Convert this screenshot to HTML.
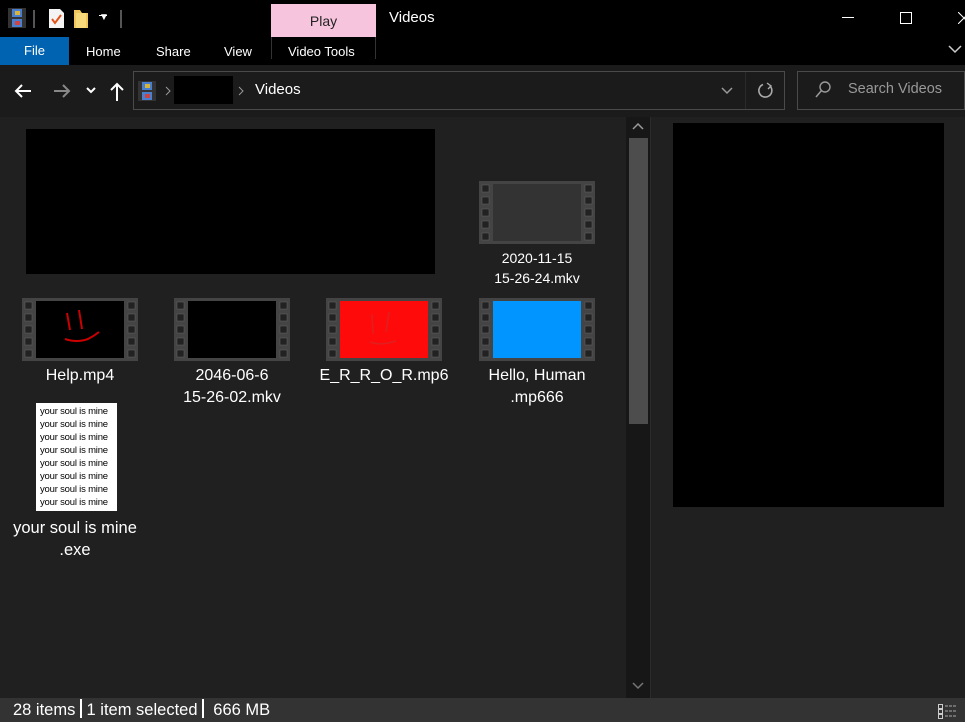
<!DOCTYPE html>
<html><head><meta charset="utf-8"><style>
*{margin:0;padding:0;box-sizing:border-box}
body{width:965px;height:722px;background:#202020;font-family:"Segoe UI","Liberation Sans",sans-serif;color:#fff;position:relative;overflow:hidden}
.a{position:absolute}
.t{font-size:13px}
.lbl{position:absolute;text-align:center;font-size:16px;color:#fff;line-height:22px;white-space:nowrap}
</style></head><body>
<div class="a" style="left:0;top:0;width:965px;height:65px;background:#000"></div>
<svg class="a" style="left:8px;top:8px" width="18" height="20" viewBox="0 0 18 20"><rect width="18" height="20" fill="#333"/><rect x="4" y="1" width="10" height="8" fill="#4a7fd0"/><rect x="4" y="11" width="10" height="8" fill="#4a7fd0"/><rect x="7" y="3" width="5" height="4" fill="#d9b43a"/><rect x="7" y="13" width="5" height="4" fill="#c44"/></svg>
<div class="a" style="left:33px;top:10px;width:2px;height:18px;background:#555"></div>
<svg class="a" style="left:49px;top:9px" width="15" height="19"><path d="M0 0H11L15 4V19H0Z" fill="#f4f4f4"/><path d="M3 10L6 14L12 6" stroke="#e2541b" stroke-width="2" fill="none"/></svg>
<svg class="a" style="left:74px;top:10px" width="14" height="18"><path d="M0 0H6L8 3H14V18H0Z" fill="#f0c65a"/><rect x="2" y="3" width="10" height="15" fill="#f7d97c"/></svg>
<div class="a" style="left:99px;top:12px;color:#fff;font-size:10px">&#9660;</div>
<div class="a" style="left:99px;top:15px;width:8px;height:1px;background:#fff"></div>
<div class="a" style="left:120px;top:10px;width:2px;height:18px;background:#555"></div>
<div class="a" style="left:271px;top:4px;width:105px;height:33px;background:#f7c4de;color:#222;font-size:14px;text-align:center;line-height:34px">Play</div>
<div class="a" style="left:389px;top:9px;font-size:15px">Videos</div>
<div class="a" style="left:842px;top:17px;width:12px;height:1px;background:#fff"></div>
<div class="a" style="left:900px;top:12px;width:12px;height:12px;border:1px solid #fff"></div>
<svg class="a" style="left:958px;top:12px" width="7" height="12"><path d="M0 0L12 12M12 0L0 12" stroke="#fff"/></svg>
<div class="a" style="left:0;top:37px;width:69px;height:28px;background:#0063b1;font-size:13px;text-align:center;line-height:28px">File</div>
<div class="a t" style="left:86px;top:44px">Home</div>
<div class="a t" style="left:156px;top:44px">Share</div>
<div class="a t" style="left:224px;top:44px">View</div>
<div class="a" style="left:271px;top:37px;width:1px;height:22px;background:#333"></div>
<div class="a" style="left:375px;top:37px;width:1px;height:22px;background:#333"></div>
<div class="a t" style="left:288px;top:44px">Video Tools</div>
<svg class="a" style="left:948px;top:45px" width="14" height="9"><path d="M1 1L7 7L13 1" stroke="#ccc" stroke-width="1.5" fill="none"/></svg>
<div class="a" style="left:0;top:65px;width:965px;height:52px;background:#1b1b1b"></div>
<svg class="a" style="left:14px;top:83px" width="18" height="16"><path d="M17 8H2M8 2L2 8L8 14" stroke="#fff" stroke-width="2" fill="none"/></svg>
<svg class="a" style="left:53px;top:83px" width="18" height="16"><path d="M1 8H16M10 2L16 8L10 14" stroke="#888" stroke-width="2" fill="none"/></svg>
<svg class="a" style="left:86px;top:87px" width="10" height="7"><path d="M1 1L5 5L9 1" stroke="#fff" stroke-width="2" fill="none"/></svg>
<svg class="a" style="left:110px;top:82px" width="14" height="19"><path d="M7 19V2M1 8L7 2L13 8" stroke="#fff" stroke-width="2" fill="none"/></svg>
<div class="a" style="left:133px;top:71px;width:652px;height:39px;border:1px solid #4a4a4a;background:#1b1b1b"></div>
<div class="a" style="left:745px;top:72px;width:1px;height:37px;background:#2a2a2a"></div>
<svg class="a" style="left:138px;top:81px" width="18" height="20"><rect width="18" height="20" fill="#333"/><rect x="4" y="1" width="10" height="8" fill="#4a7fd0"/><rect x="4" y="11" width="10" height="8" fill="#4a7fd0"/><rect x="7" y="3" width="5" height="4" fill="#d9b43a"/><rect x="7" y="13" width="5" height="4" fill="#c44"/></svg>
<svg class="a" style="left:165px;top:86px" width="6" height="10"><path d="M1 1L5 5L1 9" stroke="#999" fill="none"/></svg>
<div class="a" style="left:174px;top:76px;width:59px;height:28px;background:#000"></div>
<svg class="a" style="left:238px;top:86px" width="6" height="10"><path d="M1 1L5 5L1 9" stroke="#999" fill="none"/></svg>
<div class="a" style="left:255px;top:81px;font-size:15px">Videos</div>
<svg class="a" style="left:721px;top:87px" width="12" height="8"><path d="M1 1L6 6L11 1" stroke="#999" stroke-width="1.5" fill="none"/></svg>
<svg class="a" style="left:757px;top:82px" width="16" height="17"><path d="M13 4A6.5 6.5 0 1 1 6 2.5" stroke="#aaa" stroke-width="1.6" fill="none"/><path d="M10 1L14 4L11 7" stroke="#aaa" stroke-width="1.4" fill="none"/></svg>
<div class="a" style="left:797px;top:71px;width:168px;height:39px;border:1px solid #4a4a4a"></div>
<svg class="a" style="left:815px;top:81px" width="16" height="18"><circle cx="10" cy="6" r="5" stroke="#999" stroke-width="1.4" fill="none"/><path d="M6.5 9.5L1 16" stroke="#999" stroke-width="1.5"/></svg>
<div class="a" style="left:848px;top:81px;font-size:14.5px;color:#999">Search Videos</div>
<div class="a" style="left:26px;top:129px;width:409px;height:145px;background:#000"></div>
<div class="a" style="left:626px;top:117px;width:24px;height:581px;background:#171717"></div>
<svg class="a" style="left:632px;top:123px" width="12" height="8"><path d="M1 6L6 1L11 6" stroke="#999" stroke-width="1.5" fill="none"/></svg>
<div class="a" style="left:629px;top:138px;width:19px;height:286px;background:#4d4d4d"></div>
<svg class="a" style="left:632px;top:682px" width="12" height="8"><path d="M1 1L6 6L11 1" stroke="#777" stroke-width="1.5" fill="none"/></svg>
<div class="a" style="left:650px;top:117px;width:1px;height:581px;background:#2b2b2b"></div>
<div class="a" style="left:673px;top:123px;width:271px;height:384px;background:#000"></div>

<svg class="a" style="left:479px;top:181px" width="116" height="63"><rect width="116" height="63" fill="#444"/><rect x="14" y="3" width="88" height="57" fill="#333"/><g fill="#222" stroke="#666" stroke-width=".5"><rect x="3" y="4" width="7" height="7"/><rect x="3" y="16" width="7" height="7"/><rect x="3" y="28" width="7" height="7"/><rect x="3" y="40" width="7" height="7"/><rect x="3" y="52" width="7" height="7"/><rect x="106" y="4" width="7" height="7"/><rect x="106" y="16" width="7" height="7"/><rect x="106" y="28" width="7" height="7"/><rect x="106" y="40" width="7" height="7"/><rect x="106" y="52" width="7" height="7"/></g></svg>
<div class="lbl" style="left:479px;top:248px;width:116px;font-size:14px;line-height:20px">2020-11-15<br>15-26-24.mkv</div>

<svg class="a" style="left:22px;top:298px" width="116" height="63"><rect width="116" height="63" fill="#444"/><rect x="14" y="3" width="88" height="57" fill="#000"/><path d="M45 15L48 32M57 12L60 31M43 41Q55 45 66 41Q72 38 77 34" stroke="#c00" stroke-width="2" fill="none"/><g fill="#222" stroke="#666" stroke-width=".5"><rect x="3" y="4" width="7" height="7"/><rect x="3" y="16" width="7" height="7"/><rect x="3" y="28" width="7" height="7"/><rect x="3" y="40" width="7" height="7"/><rect x="3" y="52" width="7" height="7"/><rect x="106" y="4" width="7" height="7"/><rect x="106" y="16" width="7" height="7"/><rect x="106" y="28" width="7" height="7"/><rect x="106" y="40" width="7" height="7"/><rect x="106" y="52" width="7" height="7"/></g></svg>
<div class="lbl" style="left:22px;top:365px;width:116px">Help.mp4</div>

<svg class="a" style="left:174px;top:298px" width="116" height="63"><rect width="116" height="63" fill="#444"/><rect x="14" y="3" width="88" height="57" fill="#000"/><g fill="#222" stroke="#666" stroke-width=".5"><rect x="3" y="4" width="7" height="7"/><rect x="3" y="16" width="7" height="7"/><rect x="3" y="28" width="7" height="7"/><rect x="3" y="40" width="7" height="7"/><rect x="3" y="52" width="7" height="7"/><rect x="106" y="4" width="7" height="7"/><rect x="106" y="16" width="7" height="7"/><rect x="106" y="28" width="7" height="7"/><rect x="106" y="40" width="7" height="7"/><rect x="106" y="52" width="7" height="7"/></g></svg>
<div class="lbl" style="left:162px;top:365px;width:140px">2046-06-6<br>15-26-02.mkv</div>

<svg class="a" style="left:326px;top:298px" width="116" height="63"><rect width="116" height="63" fill="#444"/><rect x="14" y="3" width="88" height="57" fill="#ff0a0a"/><path d="M46 16L47 36M63 14L60 34M44 44Q54 48 70 43" stroke="#e02020" stroke-width="1.5" fill="none"/><g fill="#222" stroke="#666" stroke-width=".5"><rect x="3" y="4" width="7" height="7"/><rect x="3" y="16" width="7" height="7"/><rect x="3" y="28" width="7" height="7"/><rect x="3" y="40" width="7" height="7"/><rect x="3" y="52" width="7" height="7"/><rect x="106" y="4" width="7" height="7"/><rect x="106" y="16" width="7" height="7"/><rect x="106" y="28" width="7" height="7"/><rect x="106" y="40" width="7" height="7"/><rect x="106" y="52" width="7" height="7"/></g></svg>
<div class="lbl" style="left:314px;top:365px;width:140px">E_R_R_O_R.mp6</div>

<svg class="a" style="left:479px;top:298px" width="116" height="63"><rect width="116" height="63" fill="#444"/><rect x="14" y="3" width="88" height="57" fill="#0095ff"/><g fill="#222" stroke="#666" stroke-width=".5"><rect x="3" y="4" width="7" height="7"/><rect x="3" y="16" width="7" height="7"/><rect x="3" y="28" width="7" height="7"/><rect x="3" y="40" width="7" height="7"/><rect x="3" y="52" width="7" height="7"/><rect x="106" y="4" width="7" height="7"/><rect x="106" y="16" width="7" height="7"/><rect x="106" y="28" width="7" height="7"/><rect x="106" y="40" width="7" height="7"/><rect x="106" y="52" width="7" height="7"/></g></svg>
<div class="lbl" style="left:467px;top:365px;width:140px">Hello, Human<br>.mp666</div>

<div class="a" style="left:36px;top:403px;width:81px;height:108px;background:#fff;color:#000;font-size:9.5px;line-height:13px;padding:2px 0 0 4px;white-space:nowrap;letter-spacing:-0.2px">your soul is mine<br>your soul is mine<br>your soul is mine<br>your soul is mine<br>your soul is mine<br>your soul is mine<br>your soul is mine<br>your soul is mine</div>
<div class="lbl" style="left:0;top:517px;width:150px;font-size:16.5px">your soul is mine<br>.exe</div>

<div class="a" style="left:0;top:698px;width:965px;height:24px;background:#333"></div>
<div class="a" style="left:13px;top:699px;font-size:16.5px;white-space:nowrap">28 items&nbsp;<span style="display:inline-block;width:2px;height:19px;background:#fff;vertical-align:-3px"></span>&nbsp;1 item selected&nbsp;<span style="display:inline-block;width:2px;height:19px;background:#fff;vertical-align:-3px"></span>&nbsp;&nbsp;666 MB</div>
<svg class="a" style="left:938px;top:704px" width="20" height="15"><g fill="none" stroke="#ccc"><rect x="0.5" y="0.5" width="4" height="4"/><rect x="0.5" y="5.5" width="4" height="4"/><rect x="0.5" y="10.5" width="4" height="4"/></g><path d="M7 2H19M7 7H19M7 12H19" stroke="#aaa" stroke-dasharray="3 1"/></svg>
</body></html>
